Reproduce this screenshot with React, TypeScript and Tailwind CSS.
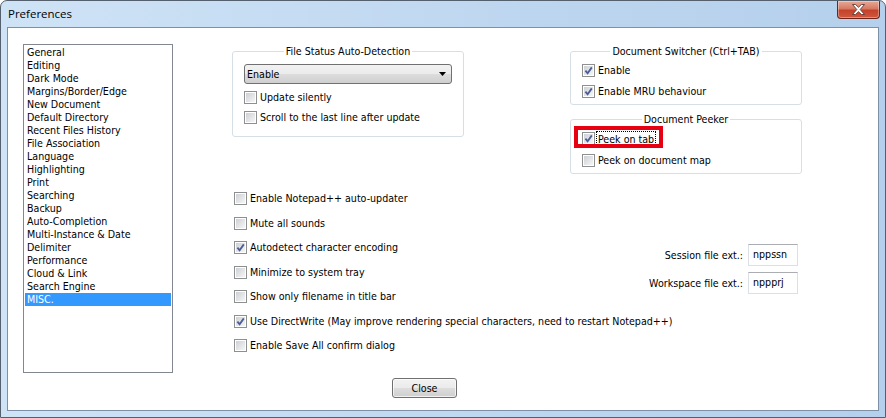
import React from "react"

const categories = [
  "General",
  "Editing",
  "Dark Mode",
  "Margins/Border/Edge",
  "New Document",
  "Default Directory",
  "Recent Files History",
  "File Association",
  "Language",
  "Highlighting",
  "Print",
  "Searching",
  "Backup",
  "Auto-Completion",
  "Multi-Instance & Date",
  "Delimiter",
  "Performance",
  "Cloud & Link",
  "Search Engine",
  "MISC.",
]

const misc = [
  { label: "Enable Notepad++ auto-updater", checked: false },
  { label: "Mute all sounds", checked: false },
  { label: "Autodetect character encoding", checked: true },
  { label: "Minimize to system tray", checked: false },
  { label: "Show only filename in title bar", checked: false },
  {
    label:
      "Use DirectWrite (May improve rendering special characters, need to restart Notepad++)",
    checked: true,
  },
  { label: "Enable Save All confirm dialog", checked: false },
]

function Box({ checked }: { checked?: boolean }) {
  return (
    <span className="relative flex h-[13px] w-[13px] shrink-0 items-center justify-center border border-[#8e8f8f] bg-white">
      <span className="h-[9px] w-[9px] bg-linear-to-br from-[#cdd0d5] to-[#f6f6f6]" />
      {checked && (
        <svg
          className="absolute left-0 top-0"
          width="11"
          height="11"
          viewBox="0 0 11 11"
        >
          <path
            d="M2.4 5.6 L4.6 8.2 L8.8 2.4"
            fill="none"
            stroke="#4a5f97"
            strokeWidth="1.8"
          />
        </svg>
      )}
    </span>
  )
}

function Check({
  label,
  checked,
  focused,
}: {
  label: string
  checked?: boolean
  focused?: boolean
}) {
  return (
    <div
      className={`flex h-[13px] items-center whitespace-nowrap ${focused ? "gap-[1px]" : "gap-[3px]"}`}
    >
      <Box checked={checked} />
      {focused ? (
        <span className="border border-dotted border-black px-[1px] leading-[14px]">
          {label}
        </span>
      ) : (
        <span className="leading-[13px]">{label}</span>
      )}
    </div>
  )
}

function Group({
  title,
  className,
  children,
}: {
  title: string
  className?: string
  children: React.ReactNode
}) {
  return (
    <fieldset
      className={`w-[232px] rounded-[3px] border border-[#d5dfe5] px-[11px] ${className ?? ""}`}
    >
      <legend className="mx-auto px-[2px] leading-[13px]">{title}</legend>
      {children}
    </fieldset>
  )
}

function ExtField({ label, value }: { label: string; value: string }) {
  return (
    <div className="flex items-center justify-end gap-[5px]">
      <span className="leading-[13px]">{label}</span>
      <div className="h-[22px] w-[50px] border border-[#dbdfe6] border-t-[#abadb3] pl-[4px] pt-[3px] leading-[13px]">
        {value}
      </div>
    </div>
  )
}

export default function App() {
  return (
    <div className="flex h-[418px] w-[886px] flex-col overflow-hidden rounded-t-[7px] border border-[#55606e] bg-[linear-gradient(to_right,#cfe3f6,#bdd6ef_60%,#b5d0ec)] font-['DejaVu_Sans_Condensed','Liberation_Sans',sans-serif] text-[10.6px] text-black">
      {/* title bar */}
      <div className="flex h-[26px] items-start justify-between">
        <span className="pl-[7px] pt-[5px] font-['Open_Sans',sans-serif] text-[11.5px] leading-[16px] text-black">
          Preferences
        </span>
        <button className="mr-[5px] flex h-[18px] w-[43px] items-center justify-center rounded-b-[4px] border border-t-0 border-[#6e2418] bg-[linear-gradient(#e8a898_0%,#d77a63_45%,#c4422a_55%,#d0593d_100%)] shadow-[inset_0_0_0_1px_rgba(255,255,255,0.35)]">
          <svg width="13" height="11" viewBox="0 0 13 11">
            <path
              d="M0.5 0.5 H3.6 L6.5 3.3 L9.4 0.5 H12.5 L8.2 5.5 L12.5 10.5 H9.4 L6.5 7.7 L3.6 10.5 H0.5 L4.8 5.5 Z"
              fill="#ffffff"
              stroke="#5b3a35"
              strokeWidth="0.9"
            />
          </svg>
        </button>
      </div>

      {/* client area */}
      <div className="mx-[6px] flex h-[384px] flex-col border border-[#7d90a8] bg-white">
        <div className="flex">
          <ul className="ml-[15px] mt-[16px] h-[329px] w-[150px] shrink-0 border border-[#828790] p-[1px]">
            {categories.map((c) => (
              <li
                key={c}
                className={`h-[13px] whitespace-nowrap pl-[2px] leading-[13px] ${c === "MISC." ? "bg-[#3399ff] text-white" : ""}`}
              >
                {c}
              </li>
            ))}
          </ul>

          <div className="ml-[59px] mt-[17px] flex">
            <div className="w-[338px]">
              <Group title="File Status Auto-Detection" className="pb-[12px]">
                <div className="mt-[6px] flex h-[20px] items-center justify-between rounded-[3px] border border-[#707070] bg-[linear-gradient(#f2f2f2_0%,#ebebeb_50%,#dddddd_50%,#cfcfcf_100%)] pl-[2px] pr-[5px]">
                  <span className="leading-[13px]">Enable</span>
                  <svg width="7" height="4" viewBox="0 0 7 4">
                    <path d="M0 0 H7 L3.5 4 Z" fill="#000" />
                  </svg>
                </div>
                <div className="mt-[7px] flex flex-col gap-[7px]">
                  <Check label="Update silently" />
                  <Check label="Scroll to the last line after update" />
                </div>
              </Group>

              <div className="ml-[2px] mt-[55px] flex flex-col gap-[11.5px]">
                {misc.map((m) => (
                  <Check key={m.label} label={m.label} checked={m.checked} />
                ))}
              </div>
            </div>

            <div className="w-[232px]">
              <Group title="Document Switcher (Ctrl+TAB)" className="pb-[6px]">
                <div className="mt-[6px] flex flex-col gap-[8px]">
                  <Check label="Enable" checked />
                  <Check label="Enable MRU behaviour" checked />
                </div>
              </Group>

              <Group title="Document Peeker" className="mt-[8px] pb-[6px]">
                <div className="mt-[6px] flex flex-col gap-[9px]">
                  <div className="relative">
                    <Check label="Peek on tab" checked focused />
                    <span className="absolute -left-[8px] -top-[6px] h-[22px] w-[89px] border-[4px] border-[#e60012]" />
                  </div>
                  <Check label="Peek on document map" />
                </div>
              </Group>

              <div className="mt-[70px] flex flex-col gap-[6px] pr-[4px]">
                <ExtField label="Session file ext.:" value="nppssn" />
                <ExtField label="Workspace file ext.:" value="nppprj" />
              </div>
            </div>
          </div>
        </div>

        <button className="ml-[384px] mt-[5px] h-[20px] w-[65px] rounded-[3px] border border-[#707070] bg-[linear-gradient(#f2f2f2_0%,#ebebeb_50%,#dddddd_50%,#cfcfcf_100%)] leading-[13px] shadow-[inset_0_0_0_1px_rgba(255,255,255,0.7)]">
          Close
        </button>
      </div>
    </div>
  )
}
